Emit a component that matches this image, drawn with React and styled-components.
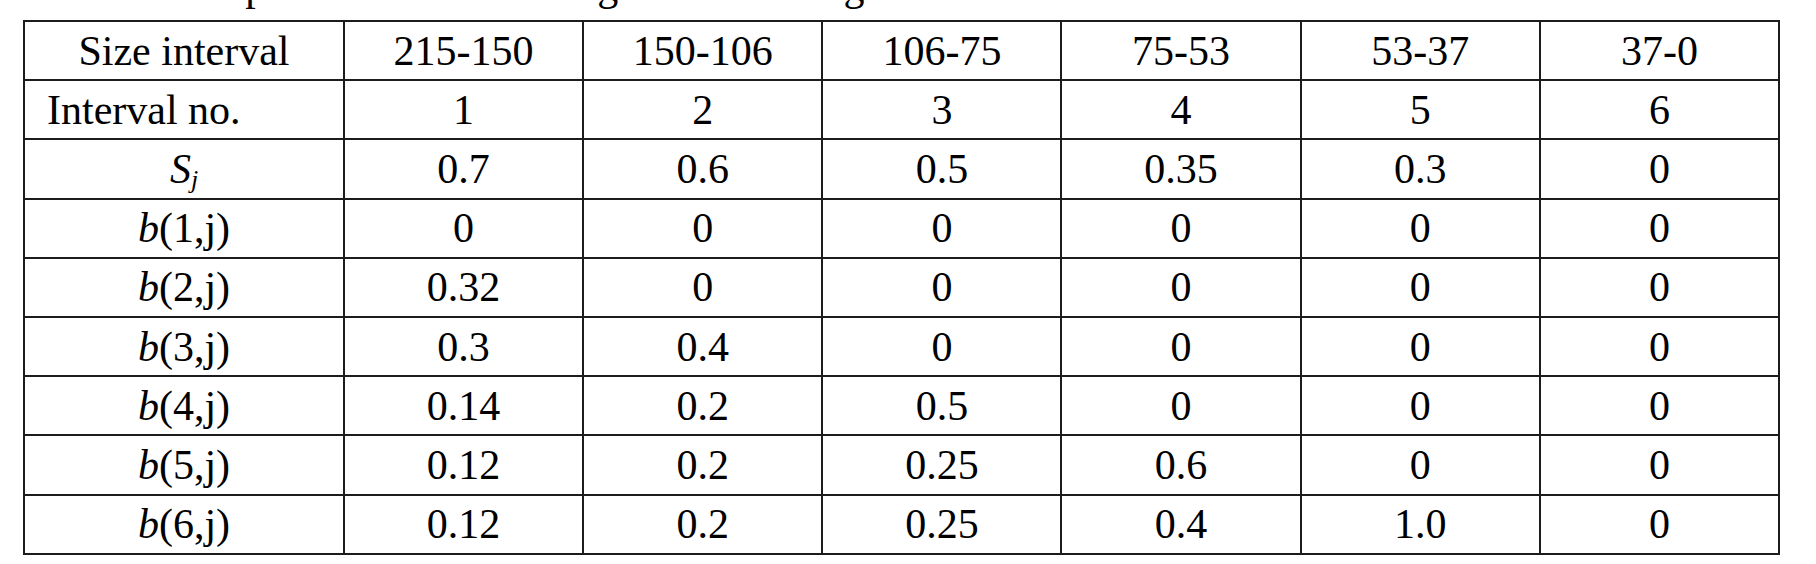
import React from "react";
import styled, { createGlobalStyle } from "styled-components";

const GlobalStyle = createGlobalStyle`
  html, body {
    margin: 0;
    padding: 0;
    background: #ffffff;
  }
  body {
    font-family: "Liberation Serif", "Times New Roman", serif;
    color: #000;
  }
`;

const Page = styled.div`
  padding: 0 0 0 23px;
  overflow: hidden;
  height: 564px;
  box-sizing: border-box;
`;

// caption sits mostly above the top edge, only descenders show
const Caption = styled.div`
  font-size: 42px;
  line-height: 42px;
  margin: -35px 0 13px 2px;
  white-space: nowrap;
`;

const Table = styled.table`
  border-collapse: collapse;
  table-layout: fixed;
  width: 1757px;
  font-size: 42px;
`;

const Row = styled.tr`
  height: 59.2px;
`;

const Cell = styled.td`
  border: 2px solid #1c1c1c;
  padding: 0 0 0 ${(p) => (p.$left ? "22px" : "0")};
  text-align: ${(p) => (p.$left ? "left" : "center")};
  vertical-align: middle;
  line-height: 1;
  white-space: nowrap;
`;

const Em = styled.i`
  font-style: italic;
`;

const Sub = styled.sub`
  font-size: 0.62em;
  font-style: italic;
  vertical-align: -0.2em;
  line-height: 0;
`;

const header = ["215-150", "150-106", "106-75", "75-53", "53-37", "37-0"];

const rows = [
  ["0.7", "0.6", "0.5", "0.35", "0.3", "0"],
  ["0", "0", "0", "0", "0", "0"],
  ["0.32", "0", "0", "0", "0", "0"],
  ["0.3", "0.4", "0", "0", "0", "0"],
  ["0.14", "0.2", "0.5", "0", "0", "0"],
  ["0.12", "0.2", "0.25", "0.6", "0", "0"],
  ["0.12", "0.2", "0.25", "0.4", "1.0", "0"],
];

const label = (i) =>
  i === 0 ? (
    <>
      <Em>S</Em>
      <Sub>j</Sub>
    </>
  ) : (
    <>
      <Em>b</Em>({i},j)
    </>
  );

export default function App() {
  return (
    <>
      <GlobalStyle />
      <Page>
        <Caption>Table 2. The parameters of breakage function of ground material</Caption>
        <Table>
          <colgroup>
            <col style={{ width: 320 }} />
            <col />
            <col />
            <col />
            <col />
            <col />
            <col />
          </colgroup>
          <tbody>
            <Row>
              <Cell>Size interval</Cell>
              {header.map((h) => (
                <Cell key={h}>{h}</Cell>
              ))}
            </Row>
            <Row>
              <Cell $left>Interval no.</Cell>
              {header.map((h, i) => (
                <Cell key={h}>{i + 1}</Cell>
              ))}
            </Row>
            {rows.map((r, i) => (
              <Row key={i}>
                <Cell>{label(i)}</Cell>
                {r.map((v, j) => (
                  <Cell key={j}>{v}</Cell>
                ))}
              </Row>
            ))}
          </tbody>
        </Table>
      </Page>
    </>
  );
}
